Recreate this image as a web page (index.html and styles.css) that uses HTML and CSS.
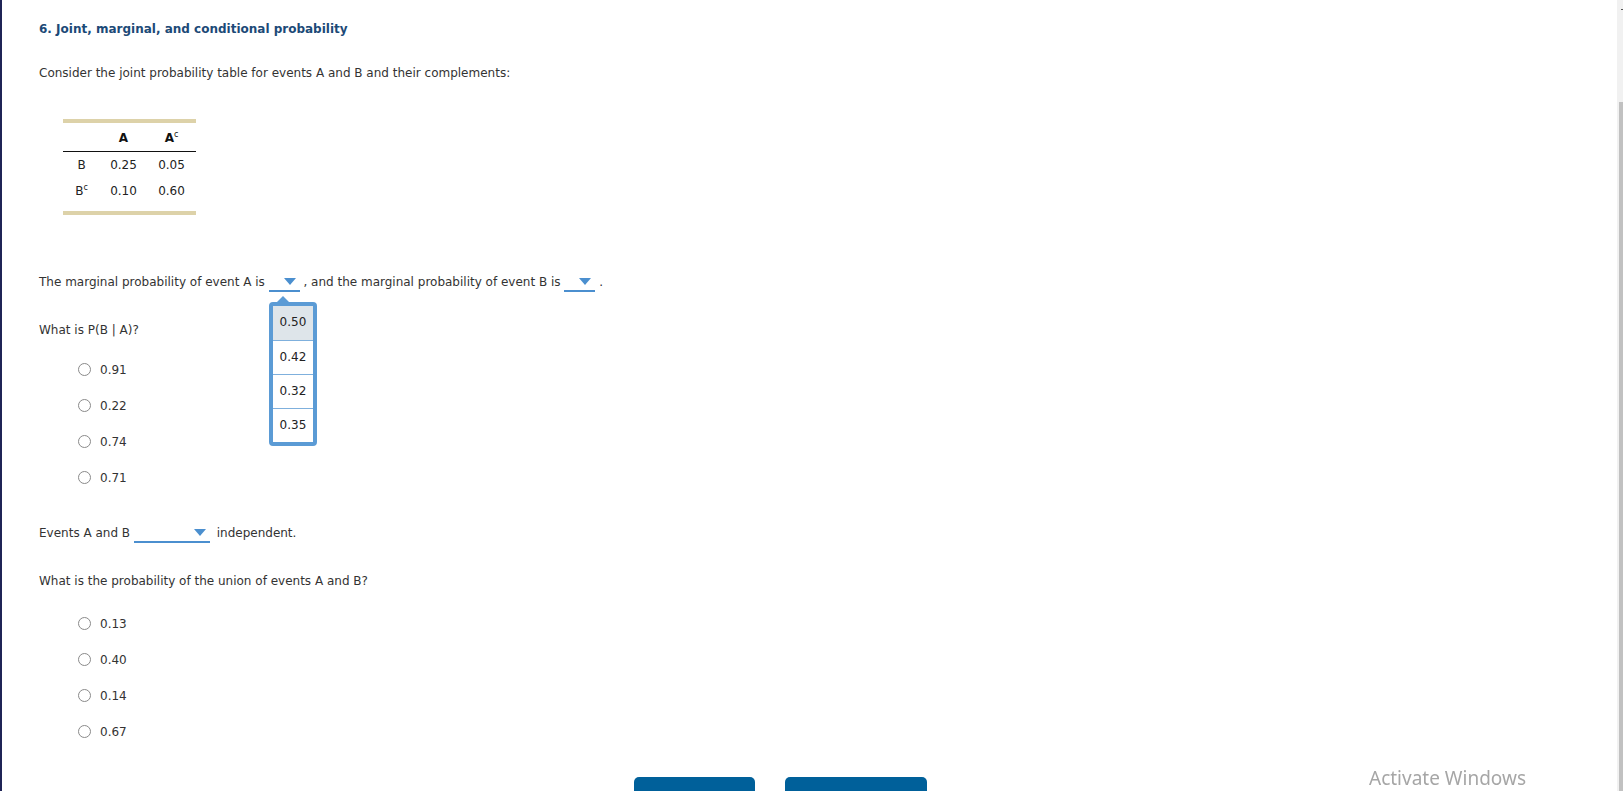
FILE: index.html
```html
<!DOCTYPE html>
<html>

<head>
    <meta charset="UTF-8">
    <link rel="stylesheet" href="styles.css">
</head>

<body>
    <div class="question">
        <h2 class="q-title">6. Joint, marginal, and conditional probability</h2>

        <p class="q-text intro">Consider the joint probability table for events A and B and their complements:</p>

        <div class="prob-table-wrap">
            <table class="prob-table">
                <thead>
                    <tr>
                        <th></th>
                        <th>A</th>
                        <th>A<sup>c</sup></th>
                    </tr>
                </thead>
                <tbody>
                    <tr>
                        <td>B</td>
                        <td>0.25</td>
                        <td>0.05</td>
                    </tr>
                    <tr>
                        <td>B<sup>c</sup></td>
                        <td>0.10</td>
                        <td>0.60</td>
                    </tr>
                </tbody>
            </table>
        </div>

        <p class="q-text marginal">The marginal probability of event A is <span class="dropdown small open"><span class="caret"></span><span class="menu"><span class="menu-item active">0.50</span><span class="menu-item">0.42</span><span class="menu-item">0.32</span><span class="menu-item">0.35</span></span></span> , and the marginal probability of event B is <span class="dropdown small"><span class="caret"></span></span> .</p>

        <p class="q-text ask">What is P(B | A)?</p>
        <div class="choices">
            <label class="choice"><span class="radio"></span>0.91</label>
            <label class="choice"><span class="radio"></span>0.22</label>
            <label class="choice"><span class="radio"></span>0.74</label>
            <label class="choice"><span class="radio"></span>0.71</label>
        </div>

        <p class="q-text events">Events A and B <span class="dropdown wide"><span class="caret"></span></span> independent.</p>

        <p class="q-text ask">What is the probability of the union of events A and B?</p>
        <div class="choices union">
            <label class="choice"><span class="radio"></span>0.13</label>
            <label class="choice"><span class="radio"></span>0.40</label>
            <label class="choice"><span class="radio"></span>0.14</label>
            <label class="choice"><span class="radio"></span>0.67</label>
        </div>

        <div class="actions">
            <button class="btn grade">Grade It Now</button>
            <button class="btn save">Save &amp; Continue</button>
        </div>
    </div>

    <!-- 窗口叠加层 -->
    <div class="watermark">Activate Windows<br>Go to Settings to activate Windows.</div>
    <div class="scrollbar">
        <div class="scroll-arrow"></div>
        <div class="scroll-thumb"></div>
    </div>
</body>
</html>
```

FILE: styles.css
```css
:root {
    --title-color: #1c4a77;
    --text-color: #333333;
    --accent: #4b8fcf;
    --menu-border: #5b9bd5;
    --tan: #ddd2a9;
    --btn-bg: #00609a;
}

html,
body {
    height: 100%;
    overflow: hidden;
}

body {
    margin: 0;
    font-family: "DejaVu Sans", Verdana, sans-serif;
    font-size: 12px;
    color: var(--text-color);
    background: #ffffff;
    border-left: 2px solid #1f2456;
}

.question {
    padding: 21px 0 0 37px;
}

.q-title {
    margin: 0;
    font-size: 12px;
    line-height: 16px;
    font-weight: bold;
    color: var(--title-color);
}

.q-text {
    margin: 0;
    line-height: 16px;
}

.intro {
    margin-top: 28px;
}

/* 概率表 */
.prob-table-wrap {
    display: inline-block;
    margin: 38px 0 0 24px;
    border-top: 4px solid var(--tan);
    border-bottom: 4px solid var(--tan);
    padding-bottom: 7px;
}

.prob-table {
    border-collapse: collapse;
    color: #222;
}

.prob-table th,
.prob-table td {
    padding: 0;
    text-align: center;
    line-height: 16px;
}

.prob-table th {
    height: 28px;
    padding-top: 3px;
    box-sizing: border-box;
    border-bottom: 1px solid #111;
    font-weight: bold;
    color: #111;
}

.prob-table td {
    height: 26px;
}

.prob-table th:nth-child(1),
.prob-table td:nth-child(1) {
    width: 37px;
}

.prob-table th:nth-child(2),
.prob-table td:nth-child(2) {
    width: 47px;
}

.prob-table th:nth-child(3),
.prob-table td:nth-child(3) {
    width: 49px;
}

sup {
    font-size: 8px;
    font-weight: normal;
    line-height: 0;
    vertical-align: 5px;
}

/* 下拉框 */
.marginal {
    margin-top: 56px;
}

.dropdown {
    position: relative;
    display: inline-flex;
    justify-content: flex-end;
    align-items: center;
    vertical-align: top;
    height: 16px;
    padding-right: 4px;
    border-bottom: 2px solid var(--accent);
    box-sizing: content-box;
}

.dropdown.small {
    width: 27px;
}

.dropdown.wide {
    width: 72px;
    margin-right: 3px;
}

.caret {
    width: 0;
    height: 0;
    border-left: 6px solid transparent;
    border-right: 6px solid transparent;
    border-top: 7px solid var(--accent);
}

.menu {
    position: absolute;
    left: 0;
    top: 28px;
    display: flex;
    flex-direction: column;
    width: 40px;
    border: 4px solid var(--menu-border);
    border-radius: 4px;
    background: #ffffff;
}

.menu::before {
    content: "";
    position: absolute;
    top: -10px;
    left: 4px;
    border-left: 6px solid transparent;
    border-right: 6px solid transparent;
    border-bottom: 6px solid var(--menu-border);
}

.menu-item {
    display: block;
    height: 33px;
    line-height: 33px;
    padding-left: 7px;
    color: #222;
    border-top: 1px solid #7fb0dd;
}

.menu-item:first-child {
    border-top: none;
    height: 34px;
}

.menu-item.active {
    background: #dee5ea;
}

/* 选项 */
.ask {
    margin-top: 30px;
}

.choices {
    display: flex;
    flex-direction: column;
    gap: 20px;
    margin: 24px 0 0 39px;
}

.choices.union {
    margin-top: 27px;
}

.choice {
    display: flex;
    align-items: center;
    gap: 9px;
    line-height: 16px;
}

.radio {
    width: 11px;
    height: 11px;
    border: 1px solid #8a8a8a;
    border-radius: 50%;
    background: #fff;
}

.events {
    margin-top: 39px;
}

.events + .ask {
    margin-top: 30px;
}

/* 底部按钮 */
.actions {
    display: flex;
    gap: 30px;
    margin: 37px 0 0 595px;
}

.btn {
    height: 34px;
    padding: 11px 0 0;
    border: none;
    border-radius: 5px;
    background: var(--btn-bg);
    color: #ffffff;
    font-family: "DejaVu Sans", Verdana, sans-serif;
    font-size: 12px;
    font-weight: bold;
    align-self: flex-start;
}

.btn.grade {
    width: 121px;
}

.btn.save {
    width: 142px;
}

.watermark {
    position: fixed;
    left: 1369px;
    top: 766px;
    font-family: "Noto Sans", sans-serif;
    font-size: 19px;
    line-height: 24px;
    color: #a6a6a6;
    white-space: nowrap;
}

.scrollbar {
    position: fixed;
    top: 0;
    right: 0;
    width: 6px;
    height: 100%;
    background: #f1f1f1;
}

.scroll-arrow {
    position: absolute;
    top: 9px;
    right: 0;
    width: 2px;
    height: 1px;
    background: #555;
}

.scroll-thumb {
    position: absolute;
    top: 102px;
    right: 0;
    width: 4px;
    bottom: 0;
    background: #c1c1c1;
}
```
